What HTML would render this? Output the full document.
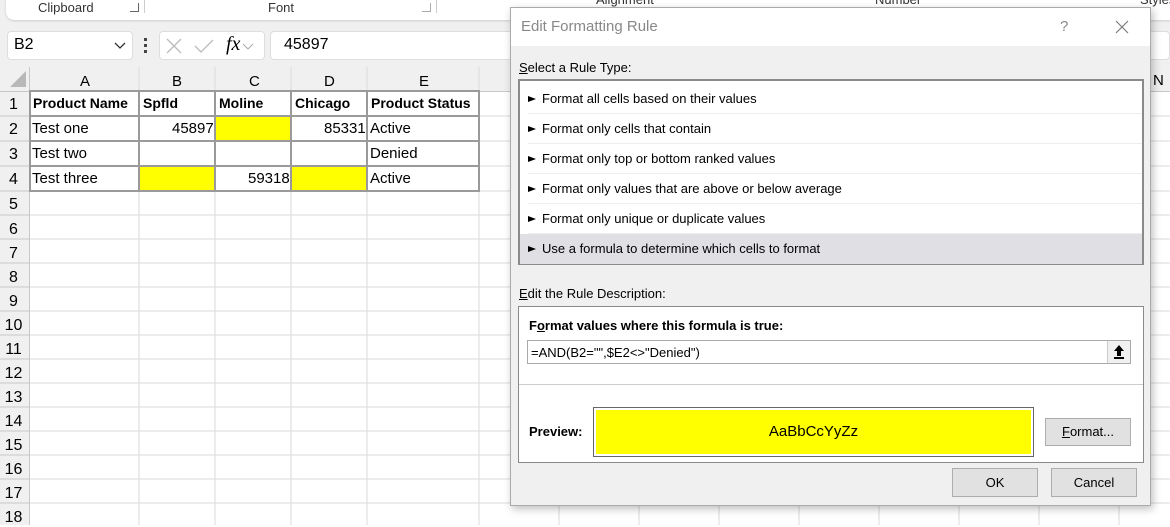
<!DOCTYPE html>
<html><head><meta charset="utf-8"><style>
*{margin:0;padding:0;box-sizing:border-box}
body{width:1170px;height:525px;overflow:hidden;position:relative;background:#fff;font-family:"Liberation Sans",sans-serif;color:#000}
.a{position:absolute}
.t{position:absolute;white-space:nowrap}
.ar{display:inline-block;width:0;height:0;border-top:3px solid transparent;border-bottom:3px solid transparent;border-left:8px solid #000;margin-right:6px;vertical-align:middle;position:relative;top:-1px}
</style></head><body>
<div class="a" style="left:0;top:0;width:1170px;height:67px;background:#f0f0f0"></div>
<div class="a" style="left:6px;top:-10px;width:1170px;height:30px;background:#fff;border-radius:0 0 8px 8px;box-shadow:0 1px 2px #ccc"></div>
<div class="t" style="left:38px;top:0;font-size:13px;color:#333">Clipboard</div>
<div class="a" style="left:130px;top:3px;width:9px;height:9px;border:1px solid #666;border-width:0 1px 1px 0"></div>
<div class="a" style="left:144px;top:0;width:1px;height:13px;background:#ccc"></div>
<div class="t" style="left:268px;top:0;font-size:13px;color:#333">Font</div>
<div class="a" style="left:422px;top:3px;width:9px;height:9px;border:1px solid #aaa;border-width:0 1px 1px 0"></div>
<div class="a" style="left:436px;top:0;width:1px;height:13px;background:#ccc"></div>
<div class="a" style="left:7px;top:31px;width:126px;height:29px;background:#fff;border:1px solid #ddd;border-radius:4px"></div>
<div class="t" style="left:14px;top:36px;font-size:16px">B2</div>
<svg class="a" style="left:113px;top:41px" width="14" height="10"><path d="M2 2L7 7L12 2" stroke="#333" stroke-width="1.3" fill="none"/></svg>
<div class="a" style="left:144px;top:38px;width:3px;height:3px;background:#444"></div>
<div class="a" style="left:144px;top:44px;width:3px;height:3px;background:#444"></div>
<div class="a" style="left:144px;top:50px;width:3px;height:3px;background:#444"></div>
<div class="a" style="left:159px;top:31px;width:106px;height:29px;background:#fff;border:1px solid #ddd;border-radius:4px"></div>
<svg class="a" style="left:165px;top:37px" width="95" height="18"><path d="M2 2L16 16M16 2L2 16" stroke="#bbb" stroke-width="1.3" fill="none"/><path d="M30 9L36 15L48 3" stroke="#bbb" stroke-width="1.3" fill="none"/><path d="M88 7L83 12L78 7" stroke="#aaa" fill="none"/></svg>
<div class="t" style="left:226px;top:33px;font-size:20px;font-style:italic;font-family:'Liberation Serif',serif">fx</div>
<div class="a" style="left:270px;top:31px;width:900px;height:29px;background:#fff;border:1px solid #ddd;border-radius:4px"></div>
<div class="t" style="left:284px;top:36px;font-size:16px">45897</div>
<svg class="a" style="left:0;top:67px" width="1170" height="458">
<rect x="0" y="0" width="1170" height="24" fill="#f0f0f0"/>
<rect x="0" y="0" width="29" height="458" fill="#f0f0f0"/>
<path d="M26 4L26 20L10 20Z" fill="#b8b8b8"/>
<g stroke="#dadada" stroke-width="1">
<path d="M139 0V458M215 0V458M291 0V458M367 0V458M479 0V458M559 24V458M639 24V458M719 24V458M799 24V458M879 24V458M959 24V458M1039 24V458M1119 24V458"/>
<path d="M29 49H1170M29 74H1170M29 99H1170M29 124H1170M29 148H1170M29 172H1170M29 196H1170M29 220H1170M29 244H1170M29 268H1170M29 292H1170M29 316H1170M29 340H1170M29 364H1170M29 388H1170M29 412H1170M29 436H1170"/>
</g>
<g stroke="#c8c8c8"><path d="M0 24.5H1170M29.5 0V458"/>
<path d="M0 49H29M0 74H29M0 99H29M0 124H29M0 148H29M0 172H29M0 196H29M0 220H29M0 244H29M0 268H29M0 292H29M0 316H29M0 340H29M0 364H29M0 388H29M0 412H29M0 436H29"/></g>
<rect x="216" y="50" width="74" height="23" fill="#ff0"/>
<rect x="140" y="100" width="74" height="23" fill="#ff0"/>
<rect x="292" y="100" width="74" height="23" fill="#ff0"/>
<g stroke="#9a9a9a" stroke-width="2" fill="none">
<rect x="30" y="24" width="449" height="100"/>
<path d="M30 49H479M30 74H479M30 99H479M139 24V124M215 24V124M291 24V124M367 24V124"/>
</g>
</svg>
<div style="position:absolute;left:0;top:0;font-size:15px">
<div class="t" style="left:80px;top:73px">A</div>
<div class="t" style="left:172px;top:73px">B</div>
<div class="t" style="left:249px;top:73px">C</div>
<div class="t" style="left:324px;top:73px">D</div>
<div class="t" style="left:419px;top:73px">E</div>
<div class="t" style="left:1153px;top:72px">N</div>
<div class="t" style="left:33px;top:95px;font-weight:bold;font-size:14px">Product Name</div>
<div class="t" style="left:143px;top:95px;font-weight:bold;font-size:14px">Spfld</div>
<div class="t" style="left:219px;top:95px;font-weight:bold;font-size:14px">Moline</div>
<div class="t" style="left:295px;top:95px;font-weight:bold;font-size:14px">Chicago</div>
<div class="t" style="left:371px;top:95px;font-weight:bold;font-size:14px">Product Status</div>
<div class="t" style="left:32px;top:120px">Test one</div>
<div class="t" style="left:172px;top:120px">45897</div>
<div class="t" style="left:324px;top:120px">85331</div>
<div class="t" style="left:370px;top:120px">Active</div>
<div class="t" style="left:32px;top:145px">Test two</div>
<div class="t" style="left:370px;top:145px">Denied</div>
<div class="t" style="left:32px;top:170px">Test three</div>
<div class="t" style="left:248px;top:170px">59318</div>
<div class="t" style="left:370px;top:170px">Active</div>
</div>
<div style="position:absolute;left:0;top:2px;width:27px;font-size:16px;text-align:center">
<div class="a" style="left:0;width:27px;top:94px">1</div>
<div class="a" style="left:0;width:27px;top:119px">2</div>
<div class="a" style="left:0;width:27px;top:144px">3</div>
<div class="a" style="left:0;width:27px;top:169px">4</div>
<div class="a" style="left:0;width:27px;top:194px">5</div>
<div class="a" style="left:0;width:27px;top:219px">6</div>
<div class="a" style="left:0;width:27px;top:243px">7</div>
<div class="a" style="left:0;width:27px;top:267px">8</div>
<div class="a" style="left:0;width:27px;top:291px">9</div>
<div class="a" style="left:0;width:27px;top:315px">10</div>
<div class="a" style="left:0;width:27px;top:339px">11</div>
<div class="a" style="left:0;width:27px;top:363px">12</div>
<div class="a" style="left:0;width:27px;top:387px">13</div>
<div class="a" style="left:0;width:27px;top:411px">14</div>
<div class="a" style="left:0;width:27px;top:435px">15</div>
<div class="a" style="left:0;width:27px;top:459px">16</div>
<div class="a" style="left:0;width:27px;top:483px">17</div>
<div class="a" style="left:0;width:27px;top:507px">18</div>
</div>
<div class="t" style="left:596px;top:-8px;font-size:13px;color:#333">Alignment</div>
<div class="t" style="left:875px;top:-8px;font-size:13px;color:#333">Number</div>
<div class="t" style="left:1140px;top:-8px;font-size:13px;color:#333">Styles</div>
<div class="a" style="left:510px;top:7px;width:641px;height:499px;background:#f0f0f0;border:1px solid #aaa;box-shadow:2px 3px 8px rgba(0,0,0,.25)">
<div class="a" style="left:0;top:0;width:639px;height:38px;background:#fff"></div>
<div class="t" style="left:10px;top:10px;font-size:15px;color:#888">Edit Formatting Rule</div>
<div class="t" style="left:549px;top:10px;font-size:15px;color:#888">?</div>
<svg class="a" style="left:604px;top:12px" width="14" height="14"><path d="M1 1L13 13M13 1L1 13" stroke="#777" stroke-width="1.1"/></svg>
<div class="t" style="left:8px;top:52px;font-size:13px"><u>S</u>elect a Rule Type:</div>
<div class="a" style="left:7px;top:71px;width:626px;height:186px;background:#fff;border:2px solid #8a8a8a">
<div style="font-size:13px;line-height:30px;padding-left:8px;padding-top:3px">
<div style="border-bottom:1px solid #eee;height:30px"><span class="ar"></span>Format all cells based on their values</div>
<div style="border-bottom:1px solid #eee;height:30px"><span class="ar"></span>Format only cells that contain</div>
<div style="border-bottom:1px solid #eee;height:30px"><span class="ar"></span>Format only top or bottom ranked values</div>
<div style="border-bottom:1px solid #eee;height:30px"><span class="ar"></span>Format only values that are above or below average</div>
<div style="border-bottom:1px solid #eee;height:30px"><span class="ar"></span>Format only unique or duplicate values</div>
<div style="height:30px;background:#e0e0e4;margin-left:-8px;padding-left:8px"><span class="ar"></span>Use a formula to determine which cells to format</div>
</div></div>
<div class="t" style="left:8px;top:278px;font-size:13px"><u>E</u>dit the Rule Description:</div>
<div class="a" style="left:7px;top:298px;width:626px;height:157px;background:#fff;border:1px solid #8a8a8a">
<div class="t" style="left:10px;top:11px;font-size:13px;font-weight:bold">F<u>o</u>rmat values where this formula is true:</div>
<div class="a" style="left:8px;top:33px;width:604px;height:24px;border:1px solid #aaa"></div>
<div class="t" style="left:12px;top:38px;font-size:13px">=AND(B2="",$E2&lt;&gt;"Denied")</div>
<div class="a" style="left:588px;top:34px;width:23px;height:22px;background:#f0f0f0;border-left:1px solid #ccc"></div>
<svg class="a" style="left:593px;top:37px" width="14" height="16"><path d="M7 1L2 7H5V12H9V7H12Z" fill="#000"/><rect x="2" y="13" width="10" height="2" fill="#000"/></svg>
<div class="a" style="left:0;top:77px;width:624px;height:1px;background:#ccc"></div>
<div class="t" style="left:10px;top:117px;font-size:13px;font-weight:bold">Preview:</div>
<div class="a" style="left:74px;top:100px;width:441px;height:50px;border:1px solid #666;background:#fff;padding:2px"><div style="width:100%;height:100%;background:#ff0;text-align:center;line-height:44px;font-size:15px">AaBbCcYyZz</div></div>
<div class="a" style="left:526px;top:111px;width:86px;height:28px;background:#e1e1e1;border:1px solid #adadad;text-align:center;line-height:26px;font-size:13px"><u>F</u>ormat...</div>
</div>
<div class="a" style="left:441px;top:460px;width:86px;height:29px;background:#e1e1e1;border:1px solid #adadad;text-align:center;line-height:27px;font-size:13px">OK</div>
<div class="a" style="left:540px;top:460px;width:86px;height:29px;background:#e1e1e1;border:1px solid #adadad;text-align:center;line-height:27px;font-size:13px">Cancel</div>
</div>
</body></html>
